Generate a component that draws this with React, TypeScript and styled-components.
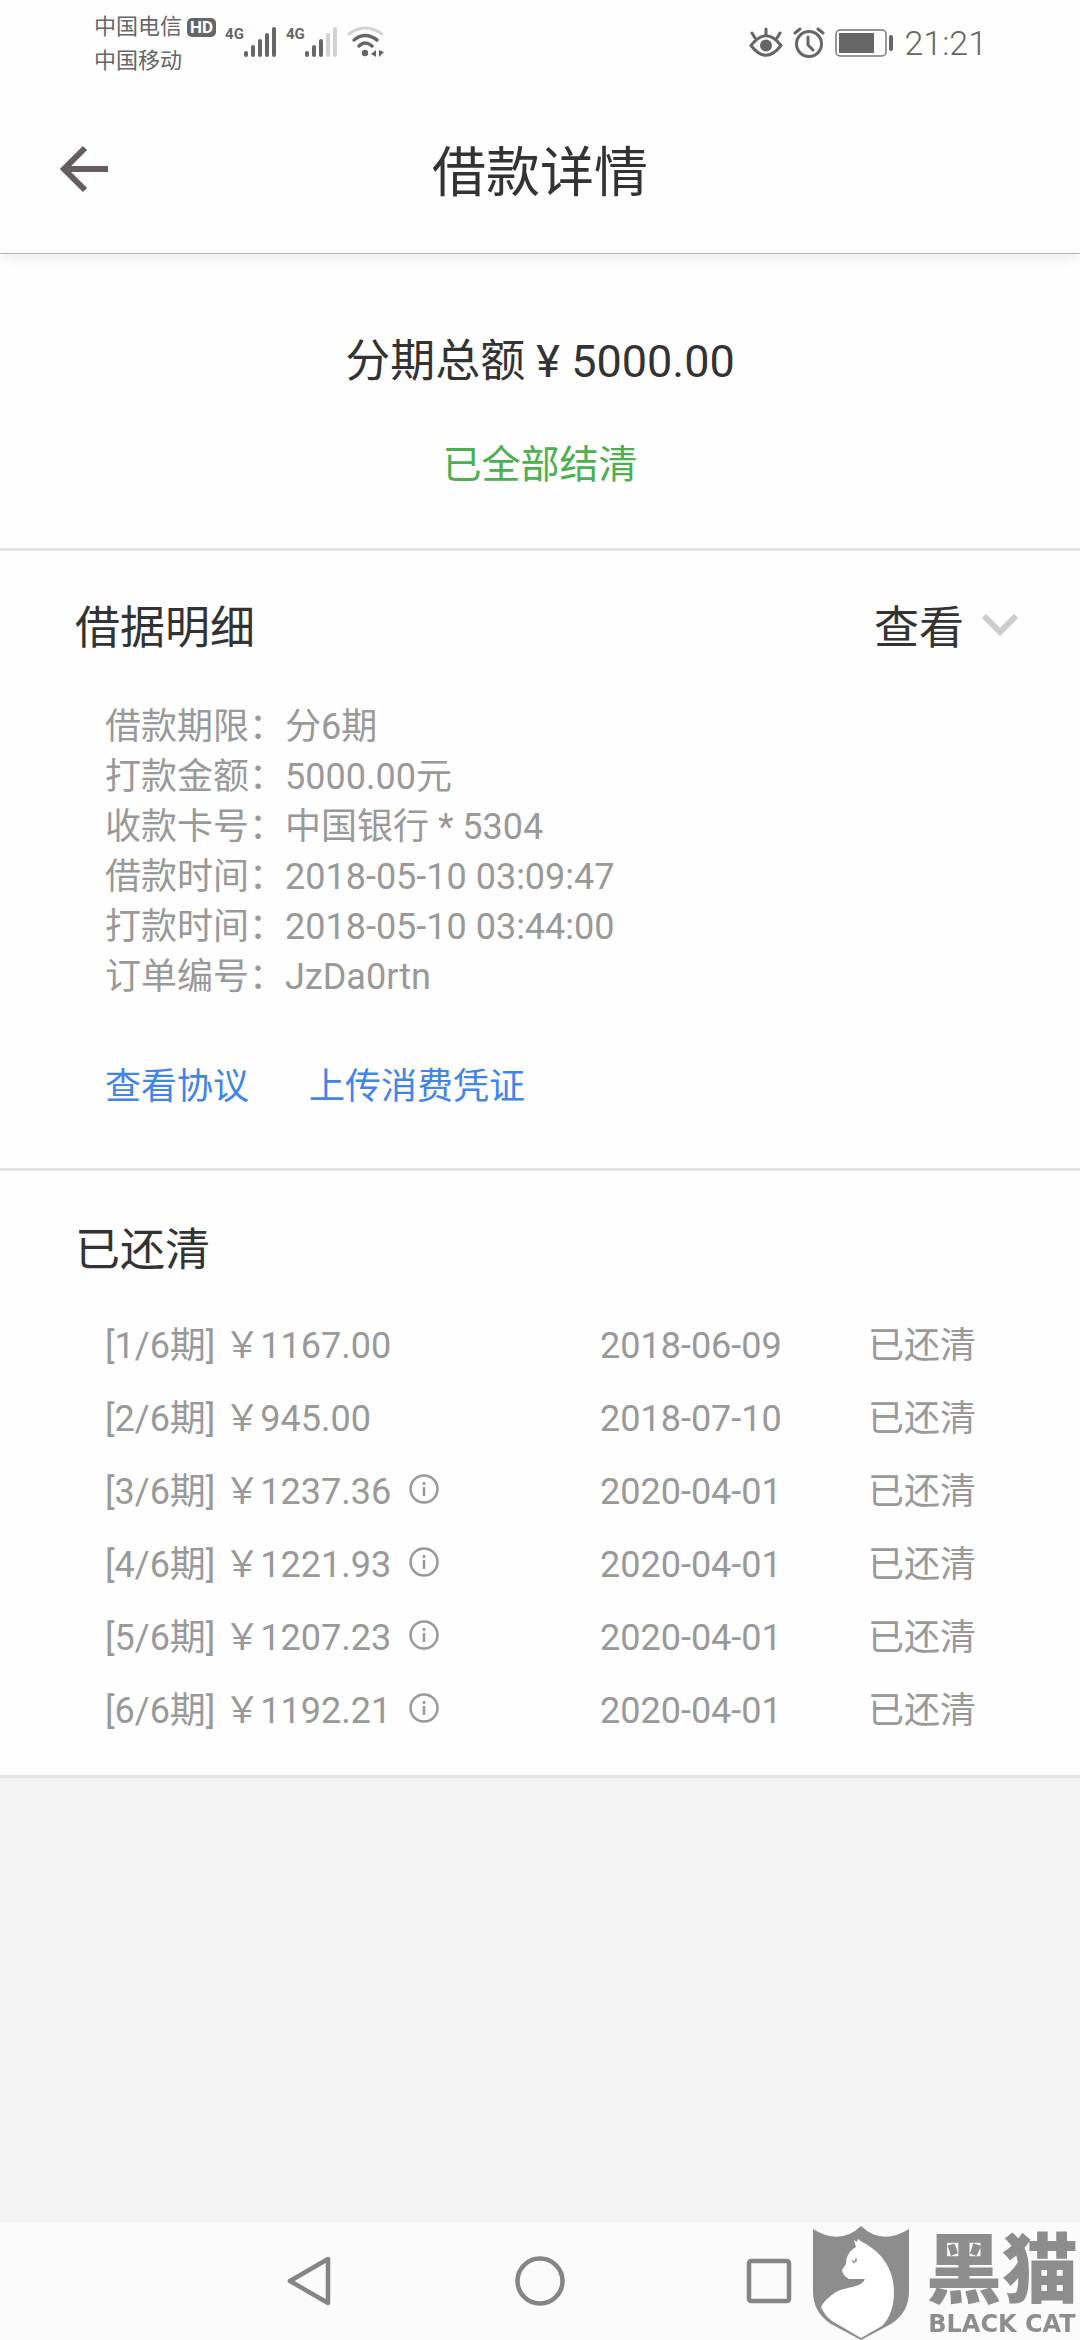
import React from 'react';
import styled, { createGlobalStyle } from 'styled-components';

const GlobalStyle = createGlobalStyle`
  *, *::before, *::after { box-sizing: border-box; }
  body {
    margin: 0;
    background: #f3f3f3;
    color: #333;
    font-family: Roboto, "Noto Sans CJK SC", sans-serif;
  }
  h1, h2, p, ul, dl, dd { margin: 0; padding: 0; font-weight: 400; }
  button { margin: 0; padding: 0; border: 0; background: none; font: inherit; color: inherit; cursor: pointer; }
  a { text-decoration: none; }
  svg { display: block; flex: none; }
`;

const Page = styled.div`
  display: flex;
  flex-direction: column;
  min-height: 100vh;
`;

const StatusBar = styled.div`
  display: flex;
  justify-content: space-between;
  height: 84px;
  padding: 10px 93px 0 94px;
  background: #fefefe;
  color: #666;
`;

const StatusGroup = styled.div`
  display: flex;
  gap: 9px;
`;

const Carriers = styled.div`
  display: flex;
  flex-direction: column;
  font-size: 22px;
  line-height: 34px;
`;

const CarrierLine = styled.div`
  display: flex;
  align-items: center;
  gap: 5px;
`;

const HdBadge = styled.span`
  padding: 0 3px;
  border-radius: 5px;
  background: #666;
  color: #fff;
  font-size: 17px;
  font-weight: 700;
  line-height: 19px;
`;

const Signal = styled.div`
  display: flex;
  align-items: flex-start;
  padding-top: 16px;
  font-size: 15px;
  font-weight: 700;
  line-height: 16px;
`;

const StatusIcons = styled.div`
  display: flex;
  align-items: center;
  gap: 10px;
  height: 66px;
`;

const Clock = styled.span`
  font-size: 34px;
  font-weight: 300;
  line-height: 40px;
`;

const Header = styled.header`
  display: grid;
  grid-template-columns: 120px 1fr 120px;
  align-items: center;
  height: 170px;
  border-bottom: 1px solid #b4b4b4;
  background: #fefefe;
  box-shadow: 0 8px 10px -4px rgba(0, 0, 0, 0.08);
  z-index: 1;
`;

const BackButton = styled.button`
  justify-self: end;
  padding-right: 11px;
`;

const Title = styled.h1`
  padding-top: 10px;
  font-size: 54px;
  line-height: 80px;
  text-align: center;
`;

const Section = styled.section`
  border-bottom: 3px solid #e3e3e3;
  background: #fefefe;
`;

const Summary = styled(Section)`
  display: flex;
  flex-direction: column;
  align-items: center;
  gap: 39px;
  padding: 74px 24px 53px;
`;

const Total = styled.p`
  font-size: 45px;
  line-height: 68px;
`;

const Settled = styled.p`
  color: #4caf50;
  font-size: 39px;
  line-height: 60px;
`;

const SectionHead = styled.div`
  display: flex;
  align-items: center;
  justify-content: space-between;
  height: 68px;
`;

const Heading = styled.h2`
  font-size: 45px;
  line-height: 68px;
`;

const ViewButton = styled.button`
  display: flex;
  align-items: center;
  gap: 18px;
  font-size: 45px;
  line-height: 68px;
`;

const Details = styled(Section)`
  padding: 44px 62px 56px 75px;
`;

const DetailList = styled.dl`
  padding: 39px 0 0 30px;
  color: #999;
  font-size: 36px;
  line-height: 50px;
`;

const DetailRow = styled.div`
  display: flex;
`;

const DetailLabel = styled.dt`
  width: 180px;
`;

const Links = styled.nav`
  display: flex;
  gap: 60px;
  padding: 60px 0 0 30px;
`;

const TextLink = styled.a`
  color: #4285e8;
  font-size: 36px;
  line-height: 50px;
`;

const Repaid = styled(Section)`
  padding: 46px 75px 28px;
`;

const Plan = styled.table`
  width: 100%;
  margin-top: 24px;
  border-collapse: collapse;
  table-layout: fixed;
  color: #999;
  font-size: 36px;
  line-height: 50px;
`;

const PlanCell = styled.td<{ $width?: number }>`
  width: ${({ $width }) => ($width ? `${$width}px` : 'auto')};
  height: 73px;
  padding: 0;
`;

const Amount = styled.div`
  display: flex;
  align-items: center;
  gap: 18px;
  padding-left: 30px;
`;

const InfoButton = styled.button`
  padding-bottom: 5px;
`;

const Filler = styled.div`
  flex: 1;
`;

const NavBar = styled.nav`
  display: flex;
  align-items: center;
  justify-content: center;
  gap: 180px;
  height: 118px;
  background: #fbfbfb;
`;

const Watermark = styled.div`
  position: fixed;
  right: 2px;
  bottom: 0;
  z-index: 2;
  display: flex;
  gap: 16px;
  color: #8e8d8e;
`;

const Brand = styled.div`
  display: flex;
  flex-direction: column;
  align-items: center;
  gap: 6px;
`;

const BrandName = styled.span`
  font-family: "Noto Sans CJK SC", sans-serif;
  font-size: 76px;
  font-weight: 900;
  line-height: 76px;
`;

const BrandLatin = styled.span`
  font-family: "DejaVu Sans", sans-serif;
  font-size: 24px;
  font-weight: 700;
  line-height: 32px;
  white-space: nowrap;
`;

const SignalBars = ({ level }: { level: number }) => (
  <svg width="33" height="32" viewBox="0 0 33 32" aria-hidden="true">
    {[6, 12, 18, 24, 30].map((h, i) => (
      <rect key={h} x={i * 7} y={31 - h} width="4" height={h} rx="2" fill={i < level ? '#666' : '#d2d2d2'} />
    ))}
  </svg>
);

const WifiIcon = () => (
  <svg width="38" height="32" viewBox="0 0 38 32" fill="none" strokeLinecap="round" aria-hidden="true">
    <path d="M2 8Q18-4 35 8" stroke="#d2d2d2" strokeWidth="3" />
    <path d="M7 14Q18 5 30 14" stroke="#666" strokeWidth="3.5" />
    <path d="M12 20Q18 14 25 20" stroke="#666" strokeWidth="3.5" />
    <circle cx="18" cy="27" r="3.2" fill="#666" />
    <path d="M24 28l5-4v7zM32 24v7l5-5z" fill="#666" />
  </svg>
);

const EyeIcon = () => (
  <svg width="34" height="32" viewBox="0 0 34 32" fill="none" stroke="#666" strokeWidth="3" strokeLinecap="round" aria-hidden="true">
    <path d="M2 18.5Q17-1 32 18.5Q17 38 2 18.5Z" strokeLinejoin="round" />
    <circle cx="17" cy="18.5" r="6" fill="#666" stroke="none" />
    <path d="M17 8V2M6 11L3 6M28 11l3-5" />
  </svg>
);

const AlarmIcon = () => (
  <svg width="32" height="32" viewBox="0 0 32 32" fill="none" stroke="#666" strokeWidth="3" strokeLinecap="round" aria-hidden="true">
    <circle cx="16" cy="17" r="12.5" />
    <path d="M15 10v8l5 5M2 6l5-4M30 6l-5-4" />
  </svg>
);

const BatteryIcon = () => (
  <svg width="59" height="28" viewBox="0 0 59 28" fill="none" aria-hidden="true">
    <rect x="1" y="1" width="50" height="26" rx="4" stroke="#777" strokeWidth="1.5" />
    <rect x="4" y="4" width="35" height="20" fill="#666" />
    <rect x="54" y="6" width="4" height="16" rx="2" fill="#666" />
  </svg>
);

const BackArrow = () => (
  <svg width="50" height="50" viewBox="0 0 50 50" fill="none" stroke="#665d5f" strokeWidth="6" aria-hidden="true">
    <path d="M26 4L5 25L26 46M5 25H49" />
  </svg>
);

const Chevron = () => (
  <svg width="36" height="30" viewBox="0 0 36 30" fill="none" stroke="#ccc" strokeWidth="6" aria-hidden="true">
    <path d="M2 2L18 18L34 2" />
  </svg>
);

const InfoIcon = () => (
  <svg width="30" height="30" viewBox="0 0 30 30" fill="none" stroke="#999" strokeWidth="2.5" aria-hidden="true">
    <circle cx="15" cy="15" r="13.5" />
    <path d="M15 13v9M15 8v3" />
  </svg>
);

const CatShield = () => (
  <svg width="98" height="114" viewBox="0 0 98 114" aria-hidden="true">
    <path d="M1 3Q28 20 49 0Q70 20 97 3V65C97 80 91 90 79 98L49 114L19 98C7 90 1 80 1 65Z" fill="#8e8d8e" />
    <path
      d="M42 14L45 16L46 13L50 16C67 24 82 41 82 66C82 80 78 92 70 100L49 112L20 95Q13 90 9 81Q12 74 24 66C36 60 49 62 53 53L37 53Q31 50 30 44L34 38C34 31 37 25 44 21Z"
      fill="#fff"
    />
    <path d="M39 33l4 3-1 2zM44 31l1 4-3 2z" fill="#8e8d8e" />
  </svg>
);

const details = [
  ['借款期限：', '分6期'],
  ['打款金额：', '5000.00元'],
  ['收款卡号：', '中国银行 * 5304'],
  ['借款时间：', '2018-05-10 03:09:47'],
  ['打款时间：', '2018-05-10 03:44:00'],
  ['订单编号：', 'JzDa0rtn'],
];

const plan = [
  { amount: '1167.00', date: '2018-06-09', info: false },
  { amount: '945.00', date: '2018-07-10', info: false },
  { amount: '1237.36', date: '2020-04-01', info: true },
  { amount: '1221.93', date: '2020-04-01', info: true },
  { amount: '1207.23', date: '2020-04-01', info: true },
  { amount: '1192.21', date: '2020-04-01', info: true },
];

export default function App() {
  return (
    <Page lang="zh-CN">
      <GlobalStyle />
      <StatusBar>
        <StatusGroup>
          <Carriers>
            <CarrierLine>中国电信<HdBadge>HD</HdBadge></CarrierLine>
            <CarrierLine>中国移动</CarrierLine>
          </Carriers>
          <Signal>4G<SignalBars level={5} /></Signal>
          <Signal>4G<SignalBars level={3} /></Signal>
          <Signal><WifiIcon /></Signal>
        </StatusGroup>
        <StatusIcons>
          <EyeIcon />
          <AlarmIcon />
          <BatteryIcon />
          <Clock>21:21</Clock>
        </StatusIcons>
      </StatusBar>

      <Header>
        <BackButton type="button" aria-label="返回"><BackArrow /></BackButton>
        <Title>借款详情</Title>
      </Header>

      <main>
        <Summary>
          <Total>分期总额 ¥ 5000.00</Total>
          <Settled>已全部结清</Settled>
        </Summary>

        <Details>
          <SectionHead>
            <Heading>借据明细</Heading>
            <ViewButton type="button">查看<Chevron /></ViewButton>
          </SectionHead>
          <DetailList>
            {details.map(([label, value]) => (
              <DetailRow key={label}>
                <DetailLabel>{label}</DetailLabel>
                <dd>{value}</dd>
              </DetailRow>
            ))}
          </DetailList>
          <Links>
            <TextLink href="#agreement">查看协议</TextLink>
            <TextLink href="#voucher">上传消费凭证</TextLink>
          </Links>
        </Details>

        <Repaid>
          <Heading>已还清</Heading>
          <Plan>
            <tbody>
              {plan.map(({ amount, date, info }, i) => (
                <tr key={amount}>
                  <PlanCell>
                    <Amount>
                      <span>[{i + 1}/6期] ￥{amount}</span>
                      {info && <InfoButton type="button" aria-label="说明"><InfoIcon /></InfoButton>}
                    </Amount>
                  </PlanCell>
                  <PlanCell $width={268}>{date}</PlanCell>
                  <PlanCell $width={137}>已还清</PlanCell>
                </tr>
              ))}
            </tbody>
          </Plan>
        </Repaid>
      </main>

      <Filler />

      <NavBar>
        <button type="button" aria-label="后退">
          <svg width="50" height="50" viewBox="0 0 50 50" fill="none" stroke="#858585" strokeWidth="4.5" strokeLinejoin="round">
            <path d="M43 3V47L5 25Z" />
          </svg>
        </button>
        <button type="button" aria-label="主页">
          <svg width="50" height="50" viewBox="0 0 50 50" fill="none" stroke="#858585" strokeWidth="4.5">
            <circle cx="25" cy="25" r="22.5" />
          </svg>
        </button>
        <button type="button" aria-label="最近任务">
          <svg width="50" height="50" viewBox="0 0 50 50" fill="none" stroke="#858585" strokeWidth="4.5">
            <rect x="4" y="5" width="40" height="40" rx="2" />
          </svg>
        </button>
      </NavBar>

      <Watermark>
        <CatShield />
        <Brand>
          <BrandName>黑猫</BrandName>
          <BrandLatin>BLACK CAT</BrandLatin>
        </Brand>
      </Watermark>
    </Page>
  );
}
